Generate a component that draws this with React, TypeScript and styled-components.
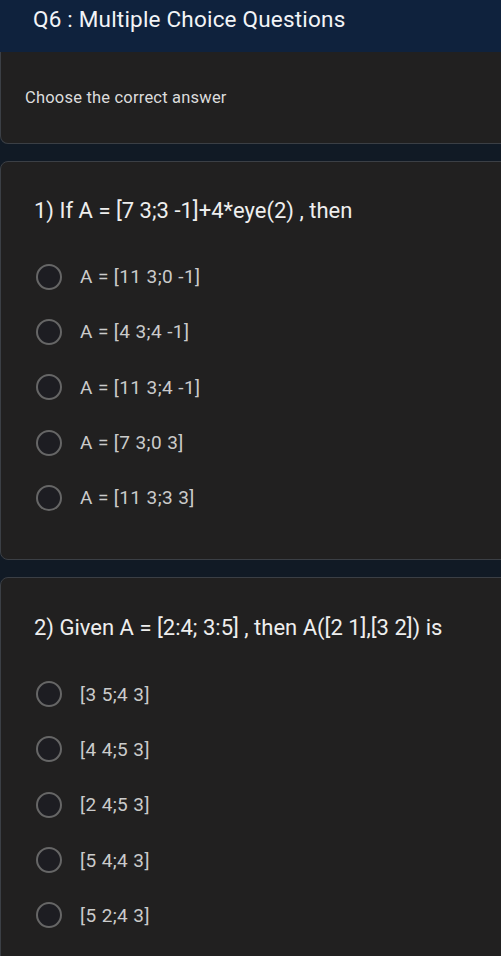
import React from "react";
import styled, { createGlobalStyle } from "styled-components";

const Global = createGlobalStyle`
  html, body { margin: 0; padding: 0; background: #111a25; overflow-x: hidden; }
  body { font-family: Roboto, "Liberation Sans", sans-serif; }
`;

const Page = styled.div`
  width: 501px;
  display: flex;
  flex-direction: column;
  gap: 17px;
  background: #111a25;
  min-height: 956px;
`;

const Header = styled.div`
  background: #0f223d;
  height: 52px;
  box-sizing: border-box;
  padding: 4px 0 0 33px;
  color: #f2f4f7;
  font-family: Roboto, "Liberation Sans", sans-serif;
  font-size: 22.5px;
  line-height: 30px;
  letter-spacing: 0.2px;
`;

const Top = styled.div`
  display: flex;
  flex-direction: column;
`;

const Card = styled.div<{ $top?: boolean }>`
  background: #212020;
  margin-right: -12px;
  border: 1px solid #3b3f45;
  border-top: ${(p) => (p.$top ? "none" : "1px solid #3b3f45")};
  border-radius: ${(p) => (p.$top ? "0 0 8px 8px" : "8px")};
  box-sizing: border-box;
`;

const Intro = styled.div`
  height: 91px;
  padding-left: 24px;
  display: flex;
  align-items: center;
  box-sizing: border-box;
  color: #dcdcdc;
  font-size: 16.5px;
  letter-spacing: 0.2px;
`;

const QuestionBody = styled.div<{ $pt: number; $pb: number }>`
  padding: ${(p) => p.$pt}px 0 ${(p) => p.$pb}px 33px;
  display: flex;
  flex-direction: column;
`;

const QText = styled.div`
  color: #eeeeee;
  font-size: 22px;
  line-height: 30px;
  margin-bottom: 23px;
  white-space: nowrap;
`;

const Options = styled.div`
  display: flex;
  flex-direction: column;
`;

const Row = styled.div`
  height: 55.3px;
  display: flex;
  align-items: center;
  gap: 18px;
`;

const Radio = styled.span`
  width: 26px;
  height: 26px;
  margin-left: 2px;
  border-radius: 50%;
  border: 2.5px solid #666666;
  background: #1d1d22;
  box-sizing: border-box;
  flex: none;
`;

const OptText = styled.span`
  color: #cbcbcb;
  font-size: 19px;
  letter-spacing: 0.4px;
  white-space: nowrap;
`;

const q1 = ["A = [11 3;0 -1]", "A = [4 3;4 -1]", "A = [11 3;4 -1]", "A = [7 3;0 3]", "A = [11 3;3 3]"];
const q2 = ["[3 5;4 3]", "[4 4;5 3]", "[2 4;5 3]", "[5 4;4 3]", "[5 2;4 3]"];

const Question = ({ text, opts, pt, pb }: { text: string; opts: string[]; pt: number; pb: number }) => (
  <Card>
    <QuestionBody $pt={pt} $pb={pb}>
      <QText>{text}</QText>
      <Options>
        {opts.map((o) => (
          <Row key={o}>
            <Radio />
            <OptText>{o}</OptText>
          </Row>
        ))}
      </Options>
    </QuestionBody>
  </Card>
);

export default function App() {
  return (
    <Page>
      <Global />
      <Top>
        <Header>Q6 : Multiple Choice Questions</Header>
        <Card $top>
          <Intro>Choose the correct answer</Intro>
        </Card>
      </Top>
      <Question text="1) If A = [7 3;3 -1]+4*eye(2) , then" opts={q1} pt={34} pb={34} />
      <Question text="2) Given A = [2:4; 3:5] , then A([2 1],[3 2]) is" opts={q2} pt={35} pb={40} />
    </Page>
  );
}
